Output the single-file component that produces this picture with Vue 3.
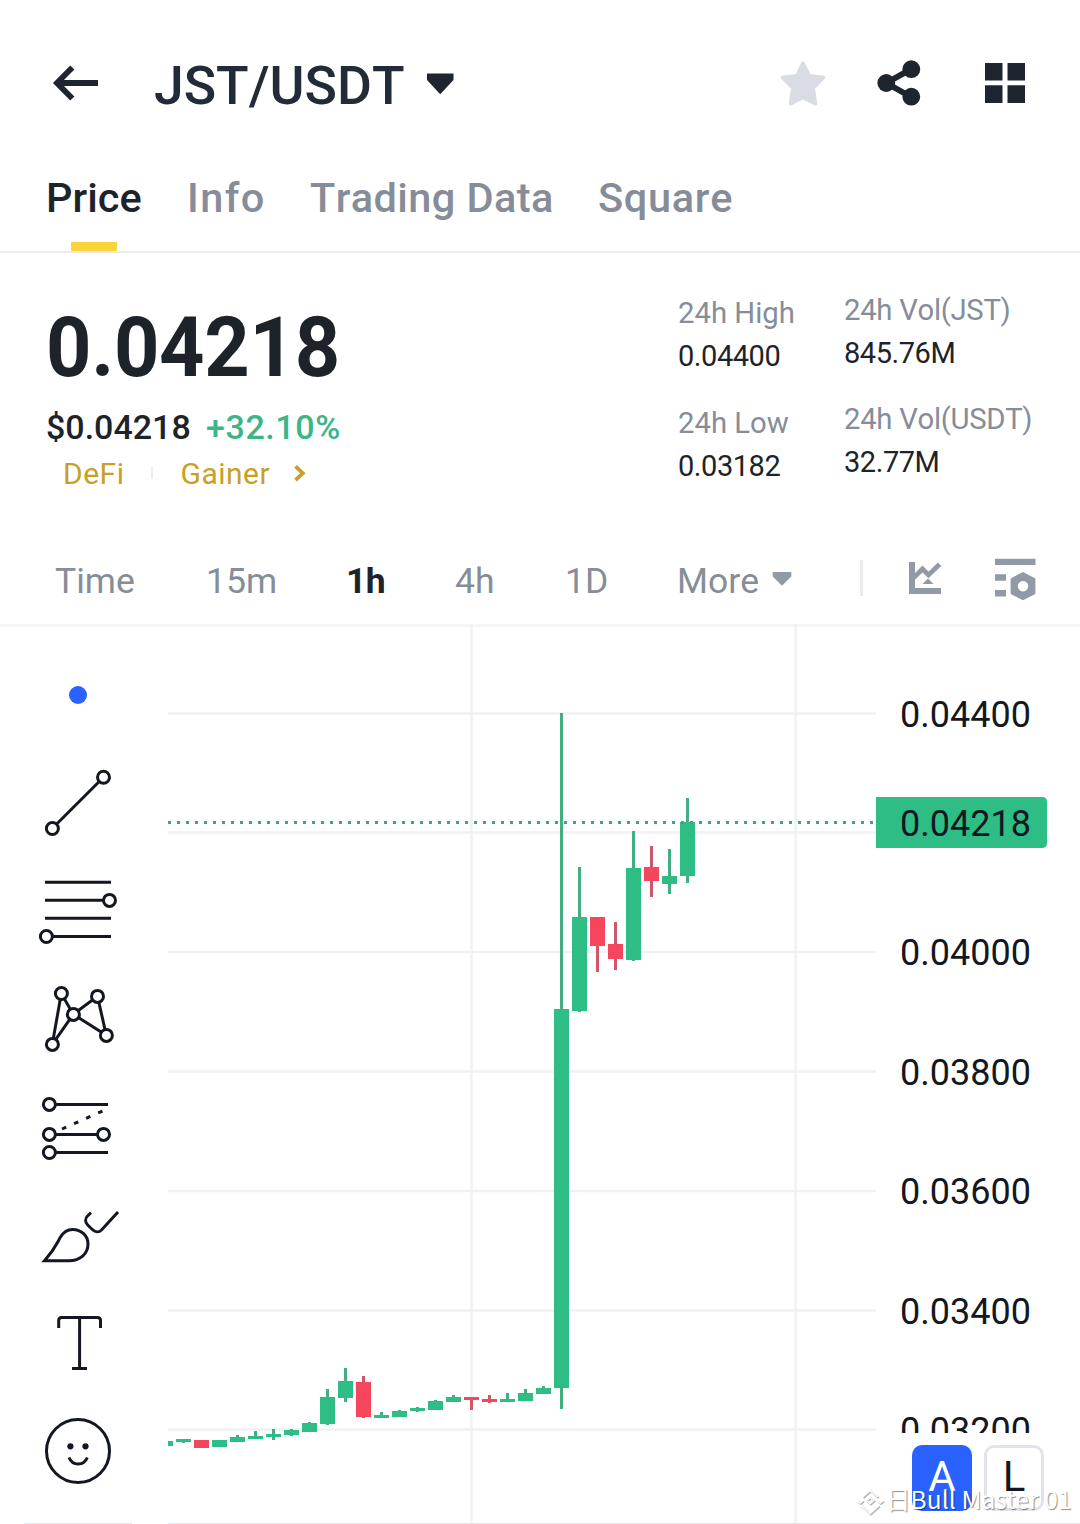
<script setup>
const tabs = ['Price', 'Info', 'Trading Data', 'Square']
const periods = ['Time', '15m', '1h', '4h', '1D']

const stats = [
  [
    { label: '24h High', value: '0.04400' },
    { label: '24h Low', value: '0.03182' },
  ],
  [
    { label: '24h Vol(JST)', value: '845.76M' },
    { label: '24h Vol(USDT)', value: '32.77M' },
  ],
]

const gridY = [713.5, 832.5, 952, 1071.5, 1191, 1310.5, 1429.5]
const axis = [
  { t: '0.04400', y: 727 },
  { t: '0.04000', y: 965 },
  { t: '0.03800', y: 1085 },
  { t: '0.03600', y: 1204 },
  { t: '0.03400', y: 1324 },
  { t: '0.03200', y: 1443 },
]

// [wick top, body top, body bottom, wick bottom, falling]
const candles = [
  [1441, 1441, 1446, 1446],
  [1439, 1439, 1442, 1443],
  [1440, 1440, 1448, 1448, 1],
  [1440, 1440, 1447, 1447],
  [1435, 1437, 1442, 1442],
  [1431, 1436, 1439, 1439],
  [1429, 1434, 1437, 1440],
  [1429, 1430, 1435, 1436],
  [1422, 1423, 1432, 1432],
  [1389, 1397, 1424, 1425],
  [1368, 1381, 1398, 1402],
  [1376, 1382, 1417, 1418, 1],
  [1412, 1415, 1418, 1418],
  [1410, 1411, 1417, 1417],
  [1407, 1408, 1411, 1412],
  [1400, 1401, 1410, 1410],
  [1395, 1397, 1402, 1402],
  [1397, 1397, 1400, 1410, 1],
  [1395, 1399, 1402, 1403, 1],
  [1393, 1399, 1402, 1402],
  [1389, 1393, 1401, 1401],
  [1386, 1388, 1394, 1394],
  [713, 1009, 1388, 1409],
  [867, 917, 1011, 1012],
  [917, 917, 946, 972, 1],
  [922, 944, 959, 970, 1],
  [831, 868, 960, 961],
  [846, 867, 881, 897, 1],
  [849, 876, 884, 894],
  [798, 822, 876, 883],
].map(([high, top, bottom, low, down], i) => ({ x: 158 + i * 18, high, top, bottom, low, down }))
</script>

<template>
  <main class="screen">
    <header class="head">
      <svg class="back" width="50" height="40" viewBox="50 63 50 40">
        <path d="M98 83H57M72.3 67.5L57 83l15.3 15.5" fill="none" stroke="#1e2530" stroke-width="5.8" />
      </svg>
      <h1>JST/USDT</h1>
      <svg class="caret" width="28" height="22" viewBox="426 73 28 22">
        <path d="M427 73.5h26.5v6.5L440.2 94.2 427 80z" fill="#1e2530" />
      </svg>
      <div class="actions">
        <svg width="50" height="50" viewBox="778 59 50 50">
          <path d="M803 63.5l6 12.6 14.2 1.3-10.2 10.8 2.3 15.3L803 97.3l-12.3 6.2 2.3-15.3-10.2-10.8 14.2-1.3z" fill="#d9dce2" stroke="#d9dce2" stroke-width="4" stroke-linejoin="round" />
        </svg>
        <svg width="50" height="50" viewBox="874 59 50 50">
          <path d="M911 69.2L886.5 83 911 97" fill="none" stroke="#1e2530" stroke-width="6" />
          <g fill="#1e2530"><circle cx="911.3" cy="69.2" r="8.9" /><circle cx="886.3" cy="83" r="8.9" /><circle cx="911.3" cy="96.7" r="8.9" /></g>
        </svg>
        <svg width="50" height="50" viewBox="980 59 50 50">
          <path d="M985 63h17.5v17.5H985zM1007.5 63h17.5v17.5h-17.5zM985 85.3h17.5V103H985zM1007.5 85.3h17.5V103h-17.5z" fill="#1e2530" />
        </svg>
      </div>
    </header>

    <nav class="tabs">
      <span v-for="(t, i) in tabs" :key="t" :class="{ active: i === 0 }">{{ t }}</span>
    </nav>

    <section class="summary">
      <div class="quote">
        <div class="price">0.04218</div>
        <div class="fiat"><span class="usd">$0.04218</span><span class="gain">+32.10%</span></div>
        <div class="tags">
          <span>DeFi</span><i></i><span>Gainer</span>
          <svg width="16" height="20" viewBox="292 463 16 20"><path d="M295.5 466.3l7.3 6.9-7.3 6.9" fill="none" stroke="#c99f27" stroke-width="3.8" /></svg>
        </div>
      </div>
      <div v-for="(col, i) in stats" :key="i" class="stats" :class="{ volume: i === 1 }">
        <dl v-for="s in col" :key="s.label">
          <dt>{{ s.label }}</dt>
          <dd>{{ s.value }}</dd>
        </dl>
      </div>
    </section>

    <nav class="periods">
      <span v-for="p in periods" :key="p" :class="{ active: p === '1h' }">{{ p }}</span>
      <span class="more">More
        <svg width="20" height="16" viewBox="772 570 20 16"><path d="M772.7 571h18.6v4.6l-9.3 9.2-9.3-9.2z" fill="#929aa5" /></svg>
      </span>
      <i class="divider"></i>
      <svg width="36" height="36" viewBox="907 560 36 36">
        <path d="M909 562h6v26h26v6h-32z" fill="#929aa5" />
        <path d="M914 577.5l8.5-8.5 6 6L939.6 564.2" fill="none" stroke="#929aa5" stroke-width="4.8" />
        <path d="M928 578.5l5.5 5.5h-11z" fill="#929aa5" />
      </svg>
      <svg class="prefs" width="44" height="44" viewBox="993 558 44 44">
        <path d="M995 558.7h40.5v6.3H995zM995 574.3h11v6.5h-11zM995 590h11v6.5h-11z" fill="#929aa5" />
        <path fill-rule="evenodd" d="M1023 572l12.4 6.4v15.6L1023 600.3l-12.4-6.3v-15.6zM1023 581a5.2 5.2 0 1 0 .01 0z" fill="#929aa5" />
      </svg>
    </nav>

    <section class="chart">
      <aside class="tools">
        <svg viewBox="24 641 108 108"><circle cx="78" cy="695" r="9" fill="#2962ff" /></svg>
        <svg viewBox="24 749 108 108">
          <g class="line"><path d="M56.7 824L99 781.7" /><circle cx="103.5" cy="777.3" r="6" /><circle cx="52.4" cy="828.5" r="6" /></g>
        </svg>
        <svg viewBox="24 857 108 108">
          <g class="line"><path d="M45 882.3h66M45 900.3h59M45 918.3h66M52 936.5h59" /><circle cx="109.5" cy="900.4" r="6" /><circle cx="46.4" cy="936.5" r="6" /></g>
        </svg>
        <svg viewBox="24 965 108 108">
          <g class="line"><path d="M61.3 993.5L52.3 1044.3 73.3 1014.3zM73.3 1014.3L97.5 996.3l8.8 39z" />
            <circle cx="61.4" cy="993.5" r="6" /><circle cx="97.5" cy="996.4" r="6" /><circle cx="73.4" cy="1014.4" r="6" /><circle cx="106.4" cy="1035.4" r="6" /><circle cx="52.4" cy="1044.4" r="6" /></g>
        </svg>
        <svg viewBox="24 1073 108 108">
          <g class="line"><path d="M49 1104.4h59M49 1134.4h54M49 1152.5h59" /><path d="M62 1129L106 1109.5" stroke-dasharray="4.6 8.6" />
            <circle cx="49.4" cy="1104.4" r="6" /><circle cx="49.4" cy="1134.4" r="6" /><circle cx="103.5" cy="1134.4" r="6" /><circle cx="49.4" cy="1152.5" r="6" /></g>
        </svg>
        <svg viewBox="24 1181 108 108">
          <g class="line"><path d="M44.5 1260.7C55 1249 56.5 1244 60.5 1237c3-5 7-7.6 12-7.6 9 0 15.5 6.5 15.5 14.6 0 10-8 16.7-19 16.7z" /><path d="M91 1212.7l-3.5 3.3c-2.5 2.5-2.5 6 0 8.7l5 5c3 2.8 6.5 2.8 9 .3L118 1212" /></g>
        </svg>
        <svg viewBox="24 1289 108 108">
          <g class="line"><path d="M58.7 1328v-7.5q0-3 3-3h35.8q3 0 3 3v7.5M79.6 1317.5v51M72 1368.6h15" /></g>
        </svg>
        <svg viewBox="24 1397 108 108">
          <g class="line"><circle cx="78" cy="1451" r="31.5" /><path d="M69 1457.5c3.5 8.7 14.8 8.7 18.3 0" /></g>
          <circle cx="70.4" cy="1446.3" r="3.1" fill="#131722" /><circle cx="85.5" cy="1446.3" r="3.1" fill="#131722" />
        </svg>
      </aside>

      <svg class="plot" width="708" height="900" viewBox="168 624 708 900">
        <g stroke="#eff1f2" stroke-width="2.4">
          <path v-for="y in gridY" :key="y" :d="`M168 ${y}H876`" />
          <path d="M471.5 624V1523M795.5 624V1523" />
        </g>
        <g v-for="c in candles" :key="c.x">
          <rect :x="c.x + 6" :y="c.high" width="3" :height="c.low - c.high" :fill="c.down ? '#d1566c' : '#44ae83'" />
          <rect :x="c.x" :y="c.top" width="15" :height="c.bottom - c.top" :fill="c.down ? '#f6465d' : '#2ebd85'" />
        </g>
        <path d="M168 822.5H876" stroke="#3ea581" stroke-width="3" stroke-dasharray="3 6" />
        <path d="M168 1523.5H876" stroke="#e3e6e8" />
      </svg>

      <svg class="axis" width="204" height="900" viewBox="876 624 204 900">
        <clipPath id="axis-clip"><rect x="876" y="624" width="204" height="809" /></clipPath>
        <g clip-path="url(#axis-clip)">
          <text v-for="a in axis" :key="a.t" x="900" :y="a.y">{{ a.t }}</text>
        </g>
        <path d="M876 797h166q5 0 5 5v41q0 5-5 5H876z" fill="#2ebd85" />
        <text x="900" y="836">0.04218</text>
        <path d="M876 1523.5h204" stroke="#e3e6e8" />
      </svg>

      <div class="modes"><b class="on">A</b><b>L</b></div>
      <div class="watermark">
        <svg width="30" height="30" viewBox="856 1488 30 30">
          <g fill="none" stroke-width="2">
            <path transform="translate(1 1)" stroke="#b4b6ba" d="M863.5 1498l7.5-6.5 7.5 6.5M858 1501.5l3 2.5 3-2.5M867.5 1501.5l3.5-3 3.5 3-3.5 3zM878 1501.5l3 2.5 3-2.5M862 1506.5l9 8 9-8" />
            <path stroke="#fff" stroke-width="1.5" d="M863.5 1498l7.5-6.5 7.5 6.5M858 1501.5l3 2.5 3-2.5M867.5 1501.5l3.5-3 3.5 3-3.5 3zM878 1501.5l3 2.5 3-2.5M862 1506.5l9 8 9-8" />
          </g>
        </svg>
        <span>日Bull Master 01</span>
      </div>
    </section>
  </main>
</template>

<style>
body { background: #fff; }
</style>

<style scoped>
.screen {
  width: 1080px;
  height: 1524px;
  overflow: hidden;
  background: #fff;
  color: #1e2329;
  font-family: Roboto, "Liberation Sans", sans-serif;
  font-kerning: none;
}
svg { display: block; flex: none; }
.head {
  display: flex;
  align-items: center;
  height: 166px;
  padding: 0 50px;
  box-sizing: border-box;
}
.back { margin-right: 53px; }
h1 {
  margin: 5px 0 0 1px;
  width: 254px;
  font-size: 53.5px;
  line-height: 60px;
  font-weight: 500;
  color: #232b39;
  white-space: nowrap;
}
.caret { margin-left: 18px; margin-top: 2px; }
.actions { display: flex; margin-left: 324px; margin-top: 2px; }
.actions svg + svg { margin-left: 46px; }
.actions svg:last-child { margin-left: 56px; }
.tabs {
  display: grid;
  grid-template-columns: 141px 123px 288px 1fr;
  height: 87px;
  padding-left: 46px;
  box-sizing: border-box;
  border-bottom: 2px solid #ebebeb;
  font-size: 41.5px;
  line-height: 64px;
  font-weight: 500;
  letter-spacing: .4px;
  color: #868d99;
}
.tabs span:nth-child(2) { letter-spacing: 1.4px; }
.tabs span:nth-child(4) { letter-spacing: .7px; }
.tabs .active { color: #1e2329; letter-spacing: 0; }
.tabs .active::after {
  content: "";
  display: block;
  width: 46px;
  height: 9px;
  margin: 12px 0 0 24.5px;
  border-radius: 1px;
  background: #fbd437;
}
.summary { display: flex; height: 285px; padding-left: 46px; box-sizing: border-box; }
.quote { width: 632px; padding-top: 45px; box-sizing: border-box; }
.price {
  font-size: 83px;
  line-height: 100px;
  font-weight: 700;
  letter-spacing: -.3px;
  transform: scaleX(.955);
  transform-origin: 0 50%;
}
.fiat { display: flex; font-size: 34px; line-height: 50px; margin-top: 4px; font-weight: 500; }
.usd { width: 160px; }
.gain { color: #3cb587; letter-spacing: .6px; }
.tags { display: flex; align-items: center; height: 40px; margin: 1px 0 0 17px; font-size: 30px; color: #c99f27; letter-spacing: .5px; }
.tags i { width: 2px; height: 12px; margin: 0 27px; background: #eaecef; }
.tags svg { margin-left: 22px; }
.stats { width: 166px; padding-top: 39px; box-sizing: border-box; font-size: 29.3px; white-space: nowrap; }
.volume { width: 230px; padding-top: 36px; }
dl { margin: 0 0 24px; line-height: 43px; }
.volume dl { margin-bottom: 23px; }
dt { color: #868d99; }
.volume dt { letter-spacing: -.3px; }
dd { margin: 0; font-size: 29px; letter-spacing: -.45px; }
.periods {
  display: flex;
  align-items: center;
  height: 89px;
  padding-left: 55px;
  box-sizing: border-box;
  border-bottom: 3px solid #f5f6f7;
  font-size: 35.5px;
  color: #868d99;
}
.periods > svg, .divider { margin-bottom: 6px; }
.periods > span { width: 151px; white-space: nowrap; }
.periods > span:nth-child(2) { width: 140px; letter-spacing: 0; }
.periods > span:nth-child(3) { width: 109px; letter-spacing: -.5px; }
.periods > span:nth-child(4) { width: 110px; }
.periods > span:nth-child(5) { width: 112px; }
.periods .active { color: #1e2329; font-weight: 700; }
.periods > .more { display: flex; align-items: center; width: 183px; }
.more svg { margin: -5px 0 0 13px; }
.divider { width: 3px; height: 36px; background: #ebebeb; }
.periods > svg { margin-left: 44px; }
.periods > .prefs { margin-left: 50px; margin-bottom: 2px; }
.chart { position: relative; display: flex; height: 900px; margin-top: -3px; }
.tools {
  display: flex;
  flex-direction: column;
  width: 108px;
  height: 900px;
  margin: 0 36px 0 24px;
  padding-top: 17px;
  box-sizing: border-box;
  border-bottom: 1px solid #e3e6e8;
}
.tools svg { width: 108px; height: 108px; }
.line { fill: none; stroke: #131722; stroke-width: 3; }
.line circle { fill: #fff; }
.axis text { font-size: 36px; fill: #131722; }
.modes { position: absolute; left: 912px; top: 821px; display: flex; gap: 12px; }
.modes b {
  width: 60px;
  height: 66px;
  box-sizing: border-box;
  border: 3px solid #e0e3eb;
  border-radius: 10px;
  background: #fff;
  color: #131722;
  font-size: 42px;
  line-height: 58px;
  font-weight: 400;
  text-align: center;
}
.modes .on { background: #2962ff; border-color: #2962ff; color: #fff; }
.watermark {
  position: absolute;
  left: 855px;
  top: 859px;
  display: flex;
  align-items: center;
  height: 34px;
  color: #fff;
  font: 400 24.5px/34px "Noto Sans CJK SC", "Noto Sans", sans-serif;
  letter-spacing: .1px;
  text-shadow: 1px 1px 1px rgba(0, 0, 0, .45);
  white-space: nowrap;
}
.watermark svg { margin-top: 4px; }
.watermark span { margin: -3px 0 0 1px; }
</style>
